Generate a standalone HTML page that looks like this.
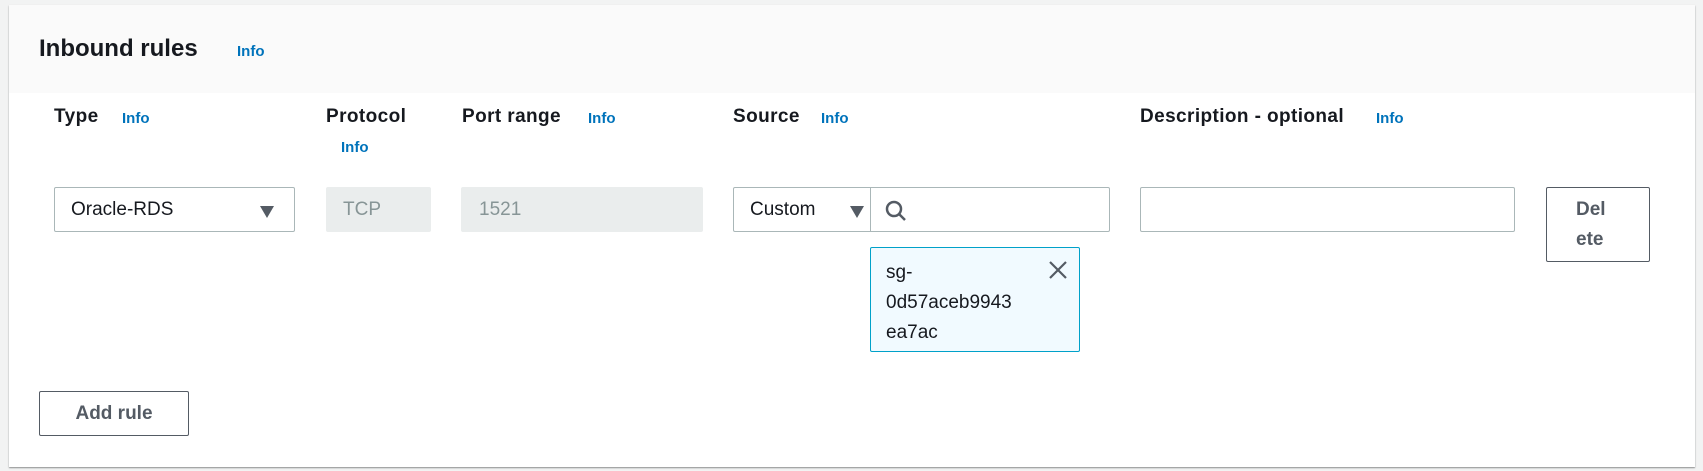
<!DOCTYPE html>
<html><head><style>
*{box-sizing:border-box;margin:0;padding:0}
body{width:1703px;height:471px;background:#f2f3f3;font-family:"Liberation Sans",sans-serif;position:relative;overflow:hidden;color:#16191f}
.panel{position:absolute;left:9px;top:5px;width:1686px;height:462px;background:#fff;box-shadow:0 1px 1px rgba(0,0,0,.3),0 1px 2px rgba(0,0,0,.15)}
.hdr{position:absolute;left:0;top:0;width:100%;height:88px;background:#fafafa}
.a{position:absolute;white-space:nowrap}
.h{font-size:19px;font-weight:bold;top:106px;letter-spacing:0.4px}
.info{font-size:15px;font-weight:bold;color:#0073bb}
.box{position:absolute;top:187px;height:45px;border:1px solid #aab7b8;border-radius:2px;background:#fff;font-size:19px;line-height:43px}
.dis{background:#eaeded;border-color:#eaeded;color:#879596}
</style></head><body>
<div class="panel"><div class="hdr"></div></div>
<div class="a" style="left:39px;top:35px;font-size:24px;font-weight:bold">Inbound rules</div>
<div class="a info" style="left:237px;top:43px">Info</div>

<div class="a h" style="left:54px">Type</div><div class="a info" style="left:122px;top:110px">Info</div>
<div class="a h" style="left:326px">Protocol</div><div class="a info" style="left:341px;top:139px">Info</div>
<div class="a h" style="left:462px">Port range</div><div class="a info" style="left:588px;top:110px">Info</div>
<div class="a h" style="left:733px">Source</div><div class="a info" style="left:821px;top:110px">Info</div>
<div class="a h" style="left:1140px">Description - optional</div><div class="a info" style="left:1376px;top:110px">Info</div>

<div class="box" style="left:54px;width:241px;padding-left:16px">Oracle-RDS<span style="position:absolute;right:20px;top:18px;width:0;height:0;border-left:7px solid transparent;border-right:7px solid transparent;border-top:12px solid #545b64"></span></div>
<div class="box dis" style="left:326px;width:105px;padding-left:16px">TCP</div>
<div class="box dis" style="left:461px;width:242px;padding-left:17px">1521</div>
<div class="box" style="left:733px;width:138px;padding-left:16px;border-radius:2px 0 0 2px">Custom<span style="position:absolute;right:6px;top:18px;width:0;height:0;border-left:7px solid transparent;border-right:7px solid transparent;border-top:12px solid #545b64"></span></div>
<div class="box" style="left:870px;width:240px;border-radius:0 2px 2px 0">
<svg style="position:absolute;left:13px;top:11px" width="24" height="24" viewBox="0 0 24 24"><circle cx="10" cy="10" r="7" fill="none" stroke="#545b64" stroke-width="2.5"/><line x1="15" y1="15" x2="21" y2="21" stroke="#545b64" stroke-width="2.5"/></svg></div>
<div class="box" style="left:1140px;width:375px"></div>
<div class="a" style="left:1546px;top:187px;width:104px;height:75px;border:1px solid #545b64;border-radius:2px;font-size:19px;font-weight:bold;color:#545b64;line-height:30px;padding:7px 0 0 29px;white-space:normal">Del<br>ete</div>

<div class="a" style="left:870px;top:247px;width:210px;height:105px;background:#f1faff;border:1px solid #00a1c9;border-radius:2px;font-size:19px;line-height:30px;padding:10px 0 0 15px;color:#16191f;white-space:normal">sg-<br>0d57aceb9943<br>ea7ac
<svg style="position:absolute;right:11px;top:12px" width="20" height="20" viewBox="0 0 20 20"><path d="M2 2L18 18M18 2L2 18" stroke="#545b64" stroke-width="2.2"/></svg></div>

<div class="a" style="left:39px;top:391px;width:150px;height:45px;border:1px solid #545b64;border-radius:2px;font-size:19px;font-weight:bold;color:#545b64;line-height:43px;text-align:center">Add rule</div>
</body></html>
